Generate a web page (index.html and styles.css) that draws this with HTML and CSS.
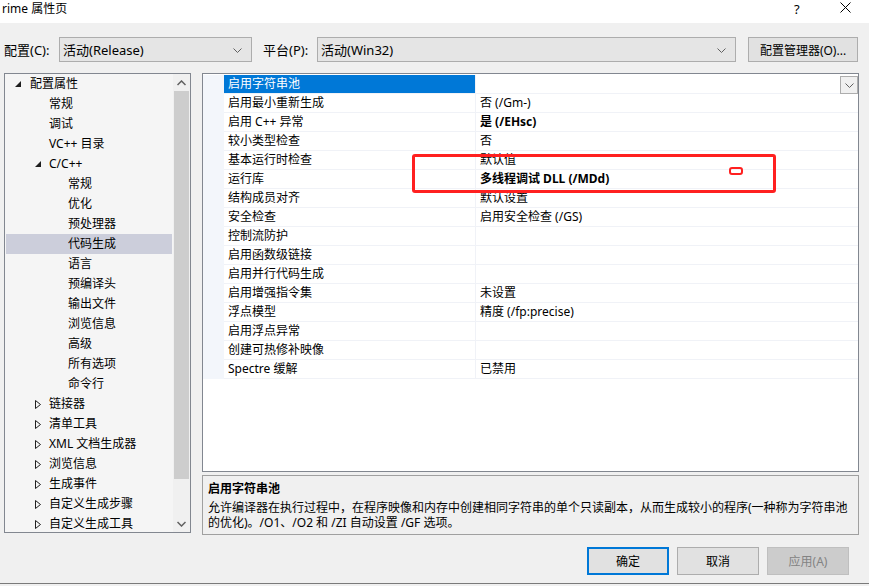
FILE: index.html
```html
<!DOCTYPE html>
<html lang="zh-CN">
<head>
  <meta charset="UTF-8" />
  <title>rime 属性页</title>
  <link rel="stylesheet" href="styles.css">
</head>
<body>

  <div class="titlebar">
    <span class="title">rime 属性页</span>
    <span class="help">?</span>
    <span class="close">
      <svg width="11" height="11" viewBox="0 0 11 11"><path d="M0.5 0.5 L10.5 10.5 M10.5 0.5 L0.5 10.5" stroke="#000" stroke-width="1" fill="none"/></svg>
    </span>
  </div>

  <div class="config-row">
    <label class="config-label">配置(C):</label>
    <div class="select select-config">
      <span>活动(Release)</span>
      <svg class="chev" width="9" height="5" viewBox="0 0 9 5"><polyline points="0.5,0.5 4.5,4.5 8.5,0.5" fill="none" stroke="#606060"/></svg>
    </div>
    <label class="config-label platform-label">平台(P):</label>
    <div class="select select-platform">
      <span>活动(Win32)</span>
      <svg class="chev" width="9" height="5" viewBox="0 0 9 5"><polyline points="0.5,0.5 4.5,4.5 8.5,0.5" fill="none" stroke="#606060"/></svg>
    </div>
    <div class="button manager">配置管理器(O)...</div>
  </div>

  <div class="main">
    <div class="tree">
      <div class="tree-list">
        <div class="node lvl0"><span class="arrow"><svg width="7" height="7" viewBox="0 0 7 7"><polygon points="6,0 6,6 0,6" fill="#1e1e1e"/></svg></span>配置属性</div>
        <div class="node lvl1">常规</div>
        <div class="node lvl1">调试</div>
        <div class="node lvl1">VC++ 目录</div>
        <div class="node lvl1"><span class="arrow"><svg width="7" height="7" viewBox="0 0 7 7"><polygon points="6,0 6,6 0,6" fill="#1e1e1e"/></svg></span>C/C++</div>
        <div class="node lvl2">常规</div>
        <div class="node lvl2">优化</div>
        <div class="node lvl2">预处理器</div>
        <div class="node lvl2 selected">代码生成</div>
        <div class="node lvl2">语言</div>
        <div class="node lvl2">预编译头</div>
        <div class="node lvl2">输出文件</div>
        <div class="node lvl2">浏览信息</div>
        <div class="node lvl2">高级</div>
        <div class="node lvl2">所有选项</div>
        <div class="node lvl2">命令行</div>
        <div class="node lvl1"><span class="arrow"><svg width="6" height="9" viewBox="0 0 6 9"><polygon points="0.5,0.5 5.5,4.5 0.5,8.5" fill="none" stroke="#1e1e1e"/></svg></span>链接器</div>
        <div class="node lvl1"><span class="arrow"><svg width="6" height="9" viewBox="0 0 6 9"><polygon points="0.5,0.5 5.5,4.5 0.5,8.5" fill="none" stroke="#1e1e1e"/></svg></span>清单工具</div>
        <div class="node lvl1"><span class="arrow"><svg width="6" height="9" viewBox="0 0 6 9"><polygon points="0.5,0.5 5.5,4.5 0.5,8.5" fill="none" stroke="#1e1e1e"/></svg></span>XML 文档生成器</div>
        <div class="node lvl1"><span class="arrow"><svg width="6" height="9" viewBox="0 0 6 9"><polygon points="0.5,0.5 5.5,4.5 0.5,8.5" fill="none" stroke="#1e1e1e"/></svg></span>浏览信息</div>
        <div class="node lvl1"><span class="arrow"><svg width="6" height="9" viewBox="0 0 6 9"><polygon points="0.5,0.5 5.5,4.5 0.5,8.5" fill="none" stroke="#1e1e1e"/></svg></span>生成事件</div>
        <div class="node lvl1"><span class="arrow"><svg width="6" height="9" viewBox="0 0 6 9"><polygon points="0.5,0.5 5.5,4.5 0.5,8.5" fill="none" stroke="#1e1e1e"/></svg></span>自定义生成步骤</div>
        <div class="node lvl1"><span class="arrow"><svg width="6" height="9" viewBox="0 0 6 9"><polygon points="0.5,0.5 5.5,4.5 0.5,8.5" fill="none" stroke="#1e1e1e"/></svg></span>自定义生成工具</div>
      </div>
      <div class="scrollbar">
        <div class="scroll-btn">
          <svg width="9" height="6" viewBox="0 0 9 6"><polyline points="0.5,5 4.5,1 8.5,5" fill="none" stroke="#606060" stroke-width="1.5"/></svg>
        </div>
        <div class="scroll-track"><div class="scroll-thumb"></div></div>
        <div class="scroll-btn">
          <svg width="9" height="6" viewBox="0 0 9 6"><polyline points="0.5,1 4.5,5 8.5,1" fill="none" stroke="#606060" stroke-width="1.5"/></svg>
        </div>
      </div>
    </div>

    <div class="right">
      <div class="grid">
        <div class="gutter"></div>
        <div class="rows">
          <div class="row">
            <div class="name selected">启用字符串池</div>
            <div class="value">
              <span></span>
              <span class="drop-btn"><svg width="9" height="5" viewBox="0 0 9 5"><polyline points="0.5,0.5 4.5,4.5 8.5,0.5" fill="none" stroke="#606060"/></svg></span>
            </div>
          </div>
          <div class="row"><div class="name">启用最小重新生成</div><div class="value">否 (/Gm-)</div></div>
          <div class="row"><div class="name">启用 C++ 异常</div><div class="value bold">是 (/EHsc)</div></div>
          <div class="row"><div class="name">较小类型检查</div><div class="value">否</div></div>
          <div class="row"><div class="name">基本运行时检查</div><div class="value">默认值</div></div>
          <div class="row"><div class="name">运行库</div><div class="value bold">多线程调试 DLL (/MDd)</div></div>
          <div class="row"><div class="name">结构成员对齐</div><div class="value">默认设置</div></div>
          <div class="row"><div class="name">安全检查</div><div class="value">启用安全检查 (/GS)</div></div>
          <div class="row"><div class="name">控制流防护</div><div class="value"></div></div>
          <div class="row"><div class="name">启用函数级链接</div><div class="value"></div></div>
          <div class="row"><div class="name">启用并行代码生成</div><div class="value"></div></div>
          <div class="row"><div class="name">启用增强指令集</div><div class="value">未设置</div></div>
          <div class="row"><div class="name">浮点模型</div><div class="value">精度 (/fp:precise)</div></div>
          <div class="row"><div class="name">启用浮点异常</div><div class="value"></div></div>
          <div class="row"><div class="name">创建可热修补映像</div><div class="value"></div></div>
          <div class="row"><div class="name">Spectre 缓解</div><div class="value">已禁用</div></div>
        </div>
        <div class="mark-box"></div>
        <div class="mark-dot"></div>
      </div>

      <div class="desc">
        <div class="desc-title">启用字符串池</div>
        <div class="desc-text">允许编译器在执行过程中，在程序映像和内存中创建相同字符串的单个只读副本，从而生成较小的程序(一种称为字符串池的优化)。/O1、/O2 和 /ZI 自动设置 /GF 选项。</div>
      </div>
    </div>
  </div>

  <div class="footer">
    <div class="button default">确定</div>
    <div class="button">取消</div>
    <div class="button disabled">应用(A)</div>
  </div>

  <div class="bottom-edge"></div>

</body>
</html>
```

FILE: styles.css
```css
body {
  margin: 0;
  width: 869px;
  height: 586px;
  overflow: hidden;
  background-color: #F0F0F0;
  color: #000;
  font-family: "Noto Sans", "Noto Sans CJK SC", sans-serif;
  font-size: 12px;
  position: relative;
}

.titlebar {
  height: 23px;
  background-color: #fff;
  display: flex;
  align-items: center;
}

.titlebar .title {
  padding-left: 2px;
  line-height: 16px;
  margin-top: -6px;
  flex: 1;
}

.titlebar .help {
  width: 14px;
  margin-top: -6px;
  margin-right: 32px;
  font-size: 13px;
}

.titlebar .close {
  width: 12px;
  margin-top: -8px;
  margin-right: 17px;
  display: flex;
}

.config-row {
  display: flex;
  align-items: center;
  margin-top: 14px;
  height: 25px;
  padding-left: 4px;
}

.config-label {
  width: 55px;
  font-size: 13px;
}

.platform-label {
  margin-left: 11px;
  width: 54px;
}

.select {
  height: 23px;
  border: 1px solid #adadad;
  background-color: #e5e5e5;
  display: flex;
  align-items: center;
  justify-content: space-between;
  padding: 0 9px 0 3px;
  font-size: 13px;
  box-sizing: content-box;
}

.select-config {
  width: 179px;
}

.select-platform {
  width: 405px;
}

.chev {
  margin-top: 1px;
}

.button {
  width: 80px;
  height: 26px;
  border: 1px solid #adadad;
  background-color: #e1e1e1;
  display: flex;
  align-items: center;
  justify-content: center;
  font-size: 12px;
}

.manager {
  width: 108px;
  height: 23px;
  margin-left: 12px;
}

.main {
  display: flex;
  margin-top: 11px;
  padding-left: 4px;
}

.tree {
  width: 185px;
  height: 458px;
  border: 1px solid #828790;
  background-color: #f5f5f5;
  display: flex;
}

.tree-list {
  flex: 1;
  padding: 0 1px;
}

.node {
  height: 20px;
  line-height: 20px;
  display: flex;
  align-items: center;
  white-space: nowrap;
  position: relative;
}

.node .arrow {
  position: absolute;
  display: flex;
  align-items: center;
  height: 20px;
  top: 0;
}

.lvl0 {
  padding-left: 24px;
}

.lvl0 .arrow {
  left: 9px;
}

.lvl1 {
  padding-left: 43px;
}

.lvl1 .arrow {
  left: 29px;
}

.lvl2 {
  padding-left: 62px;
}

.node.selected {
  background-color: #cccedb;
}

.scrollbar {
  width: 17px;
  display: flex;
  flex-direction: column;
  background-color: #f0f0f0;
}

.scroll-btn {
  height: 17px;
  display: flex;
  align-items: center;
  justify-content: center;
}

.scroll-track {
  flex: 1;
  padding: 0 1px;
}

.scroll-thumb {
  height: 388px;
  background-color: #cdcdcd;
}

.right {
  margin-left: 11px;
  display: flex;
  flex-direction: column;
  gap: 3px;
}

.grid {
  width: 655px;
  height: 397px;
  border: 1px solid #828790;
  background-color: #fff;
  display: flex;
  position: relative;
}

.gutter {
  width: 21px;
  height: 304px;
  margin-top: 1px;
  background-color: #f3f6fb;
}

.rows {
  flex: 1;
  padding-top: 1px;
}

.row {
  display: flex;
  height: 19px;
  border-bottom: 1px solid #f0f2f7;
  box-sizing: border-box;
}

.row .name {
  width: 252px;
  padding-left: 4px;
  line-height: 18px;
  border-right: 1px solid #f0f2f7;
  box-sizing: border-box;
  white-space: nowrap;
}

.row .name.selected {
  background-color: #0078d7;
  color: #fff;
}

.row .value {
  flex: 1;
  padding-left: 4px;
  line-height: 18px;
  white-space: nowrap;
  display: flex;
  justify-content: space-between;
}

.row .value.bold {
  font-weight: bold;
}

.drop-btn {
  width: 16px;
  height: 16px;
  margin-top: 1px;
  border: 1px solid #adadad;
  background-color: #f0f0f0;
  display: flex;
  align-items: center;
  justify-content: center;
}

.mark-box {
  position: absolute;
  left: 209px;
  top: 80px;
  width: 358px;
  height: 33px;
  border: 3px solid #ff2020;
  border-radius: 3px;
}

.mark-dot {
  position: absolute;
  left: 526px;
  top: 93px;
  width: 10px;
  height: 4px;
  border: 2px solid #ff2020;
  border-radius: 3px;
}

.desc {
  width: 645px;
  height: 54px;
  border: 1px solid #a0a0a0;
  padding: 4px 5px 0;
  background-color: #f0f0f0;
}

.desc-title {
  font-weight: bold;
  line-height: 18px;
  margin-bottom: 2px;
}

.desc-text {
  line-height: 15px;
}

.footer {
  display: flex;
  justify-content: flex-end;
  gap: 8px;
  margin-top: 12px;
  padding-right: 20px;
}

.button.default {
  border: 2px solid #0078d7;
  width: 78px;
  height: 24px;
}

.button.disabled {
  background-color: #cccccc;
  border-color: #bfbfbf;
  color: #838383;
}

.bottom-edge {
  position: absolute;
  left: 0;
  bottom: 2px;
  width: 869px;
  height: 1px;
  background-color: #7a7a7a;
}
```
